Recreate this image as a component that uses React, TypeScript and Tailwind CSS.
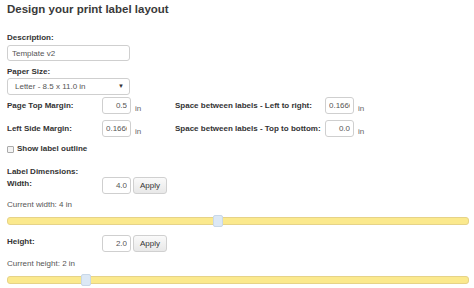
import React from 'react';

const font = { fontFamily: '"Liberation Sans", Arial, sans-serif' };

const SmallInput = ({ value }: { value: string }) => (
  <input
    readOnly
    value={value}
    className="h-[17px] w-[29px] rounded-[3px] border border-[#cfcfcf] bg-white px-[3px] text-right text-[8px] text-[#555] outline-none"
  />
);

const Unit = () => <span className="ml-[4px] mt-[6px] text-[8px] text-[#666]">in</span>;

const ApplyButton = () => (
  <button className="ml-[2px] h-[17px] w-[34px] rounded-[3px] border border-[#d0d0d0] bg-gradient-to-b from-[#fafafa] to-[#e8e8e8] text-[8px] text-[#333]">
    Apply
  </button>
);

const Slider = ({ thumb }: { thumb: number }) => (
  <div className="relative h-[8px] w-[462px] rounded-[3px] border border-[#e6d388] bg-[#fbe98d]">
    <div
      className="absolute top-[-3px] h-[12px] w-[10px] rounded-[2px] border border-[#c9d8e8] bg-[#dce8f5]"
      style={{ left: thumb }}
    />
  </div>
);

export default function App() {
  return (
    <div className="min-h-screen w-[474px] bg-white px-[7px] text-[#333] antialiased" style={font}>
      <h1 className="pt-[3px] text-[11.5px] font-bold leading-[13px] text-[#3a3a3a]">Design your print label layout</h1>

      <div className="mt-[17px] text-[8px] font-bold leading-[10px]">Description:</div>
      <input
        readOnly
        value="Template v2"
        className="mt-[2px] block h-[16px] w-[123px] rounded-[3px] border border-[#cfcfcf] px-[4px] text-[8px] text-[#555] outline-none"
      />

      <div className="mt-[6px] text-[8px] font-bold leading-[10px]">Paper Size:</div>
      <div className="mt-[1px] flex h-[17px] w-[123px] items-center justify-between rounded-[3px] border border-[#cfcfcf] pl-[7px] pr-[5px] text-[8px] text-[#555]">
        <span>Letter - 8.5 x 11.0 in</span>
        <span className="text-[6px] text-[#333]">▼</span>
      </div>

      <div className="mt-[2px] flex h-[17px] items-center">
        <div className="flex w-[168px] items-center">
          <span className="w-[95px] text-[8px] font-bold">Page Top Margin:</span>
          <SmallInput value="0.5" />
          <Unit />
        </div>
        <span className="w-[150px] text-[8px] font-bold">Space between labels - Left to right:</span>
        <SmallInput value="0.16666" />
        <Unit />
      </div>

      <div className="mt-[6px] flex h-[17px] items-center">
        <div className="flex w-[168px] items-center">
          <span className="w-[95px] text-[8px] font-bold">Left Side Margin:</span>
          <SmallInput value="0.16666" />
          <Unit />
        </div>
        <span className="w-[150px] text-[8px] font-bold">Space between labels - Top to bottom:</span>
        <SmallInput value="0.0" />
        <Unit />
      </div>

      <div className="mt-[7px] flex h-[10px] items-center">
        <span className="h-[7px] w-[7px] rounded-[1px] border border-[#aaa] bg-[#f4f4f4]" />
        <span className="ml-[3px] text-[8px] font-bold">Show label outline</span>
      </div>

      <div className="mt-[13px] text-[8px] font-bold leading-[10px]">Label Dimensions:</div>
      <div className="flex h-[17px] items-center">
        <span className="-mt-[3px] w-[95px] text-[8px] font-bold">Width:</span>
        <SmallInput value="4.0" />
        <ApplyButton />
      </div>
      <div className="mt-[6px] text-[8px] leading-[10px] text-[#555]">Current width: 4 in</div>
      <div className="mt-[7px]">
        <Slider thumb={205} />
      </div>

      <div className="mt-[10px] flex h-[17px] items-center">
        <span className="-mt-[3px] w-[95px] text-[8px] font-bold">Height:</span>
        <SmallInput value="2.0" />
        <ApplyButton />
      </div>
      <div className="mt-[7px] text-[8px] leading-[10px] text-[#555]">Current height: 2 in</div>
      <div className="mt-[7px]">
        <Slider thumb={73} />
      </div>
    </div>
  );
}
